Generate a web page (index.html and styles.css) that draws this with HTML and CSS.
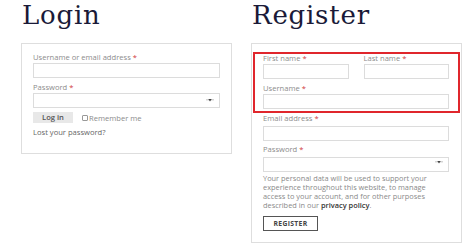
FILE: index.html
```html
<!DOCTYPE html>
<html lang="en">
<head>
<meta charset="utf-8">
<title>Login / Register</title>
<link rel="stylesheet" href="styles.css">
</head>
<body>
<div class="page">
  <section class="col">
    <h2 class="title">Login</h2>
    <form class="card login">
      <label class="lbl">Username or email address <span class="req">*</span></label>
      <input class="field" type="text">
      <label class="lbl gap">Password <span class="req">*</span></label>
      <div class="pw">
        <input class="field" type="password">
        <svg class="eye" viewBox="0 0 8 4" width="8" height="4"><path d="M0 1.6 L8 1.6 L8 2.2 L0 2.2 Z" fill="#999"/><path d="M2.3 1 L5.7 1 L4 3.4 Z" fill="#444"/></svg>
      </div>
      <div class="actions">
        <button class="btn-login" type="button">Log in</button>
        <span class="remember"><span class="box"></span>Remember me</span>
      </div>
      <a class="lost" href="#">Lost your password?</a>
    </form>
  </section>
  <section class="col">
    <h2 class="title">Register</h2>
    <form class="card register">
      <div class="highlight">
        <div class="names">
          <div class="fieldset">
            <label class="lbl">First name <span class="req">*</span></label>
            <input class="field" type="text">
          </div>
          <div class="fieldset">
            <label class="lbl">Last name <span class="req">*</span></label>
            <input class="field" type="text">
          </div>
        </div>
        <label class="lbl gap">Username <span class="req">*</span></label>
        <input class="field" type="text">
      </div>
      <div class="rest">
        <label class="lbl email">Email address <span class="req">*</span></label>
        <input class="field" type="email">
        <label class="lbl gap2">Password <span class="req">*</span></label>
        <div class="pw">
          <input class="field" type="password">
          <svg class="eye" viewBox="0 0 8 4" width="8" height="4"><path d="M0 1.6 L8 1.6 L8 2.2 L0 2.2 Z" fill="#999"/><path d="M2.3 1 L5.7 1 L4 3.4 Z" fill="#444"/></svg>
        </div>
        <p class="privacy">Your personal data will be used to support your experience throughout this website, to manage access to your account, and for other purposes described in our <b class="policy">privacy policy</b>.</p>
        <button class="btn-register" type="button">REGISTER</button>
      </div>
    </form>
  </section>
</div>
</body>
</html>
```
FILE: styles.css
```css
* { box-sizing: border-box; }
html, body { margin: 0; padding: 0; background: #fff; }
body {
  width: 474px;
  height: 248px;
  overflow: hidden;
  font-family: "Open Sans", "Noto Sans", sans-serif;
  color: #8a8a8a;
}
.page {
  display: grid;
  grid-template-columns: 211px 211px;
  column-gap: 19px;
  padding-left: 21px;
}
.col { display: flex; flex-direction: column; }
.title {
  margin: 0 0 13px 0;
  padding-left: 1px;
  font-family: "DejaVu Serif", "Liberation Serif", serif;
  font-weight: normal;
  font-size: 26px;
  line-height: 30px;
  letter-spacing: 0.8px;
  color: #1a1a38;
}
.card {
  border: 1px solid #dedede;
  display: flex;
  flex-direction: column;
  margin: 0;
}
.login { padding: 9px 11px 15px 11px; height: 111px; }
.lbl {
  display: block;
  font-size: 7.6px;
  line-height: 9px;
  color: #8c8c8c;
}
.req { color: #d0383e; }
.field {
  display: block;
  width: 100%;
  height: 15px;
  margin: 1px 0 0 0;
  padding: 0;
  border: 1px solid #dcdcdc;
  background: #fff;
  outline: none;
}
.gap { margin-top: 5px; }
.gap2 { margin-top: 4px; }
.pw { position: relative; }
.eye { position: absolute; right: 6px; top: 6px; }
.actions {
  display: flex;
  align-items: center;
  gap: 9px;
  margin-top: 4px;
}
.btn-login {
  width: 40px;
  height: 11px;
  padding: 0;
  border: 0;
  background: #e8e8e8;
  font-family: inherit;
  font-size: 7.6px;
  font-weight: 600;
  line-height: 11px;
  color: #555;
}
.remember {
  display: flex;
  align-items: center;
  font-size: 7.6px;
  color: #8c8c8c;
}
.box {
  width: 6px;
  height: 6px;
  border: 1px solid #999;
  border-radius: 1px;
  margin-right: 1px;
}
.lost {
  margin-top: 5px;
  font-size: 7.6px;
  line-height: 9px;
  color: #666;
  text-decoration: none;
}
.register { padding: 8px 1px 10px 1px; height: 200px; }
.highlight {
  border: 2px solid #e0262c;
  padding: 0 9px 2px 8px;
}
.names {
  display: grid;
  grid-template-columns: 1fr 1fr;
  column-gap: 15px;
}
.rest { padding: 0 11px 0 10px; display: flex; flex-direction: column; align-items: stretch; }
.email { margin-top: 1px; }
.rest .field { margin-top: 3px; }
.privacy {
  margin: 2px 0 0 0;
  font-size: 7.4px;
  line-height: 9px;
  color: #8a8a8a;
}
.policy { color: #333; font-weight: 600; }
.btn-register {
  align-self: flex-start;
  margin-top: 6px;
  width: 55px;
  height: 15px;
  padding: 0;
  border: 1.5px solid #555;
  background: #fff;
  font-family: inherit;
  font-size: 6.8px;
  font-weight: 700;
  letter-spacing: 0.3px;
  color: #444;
}
```
